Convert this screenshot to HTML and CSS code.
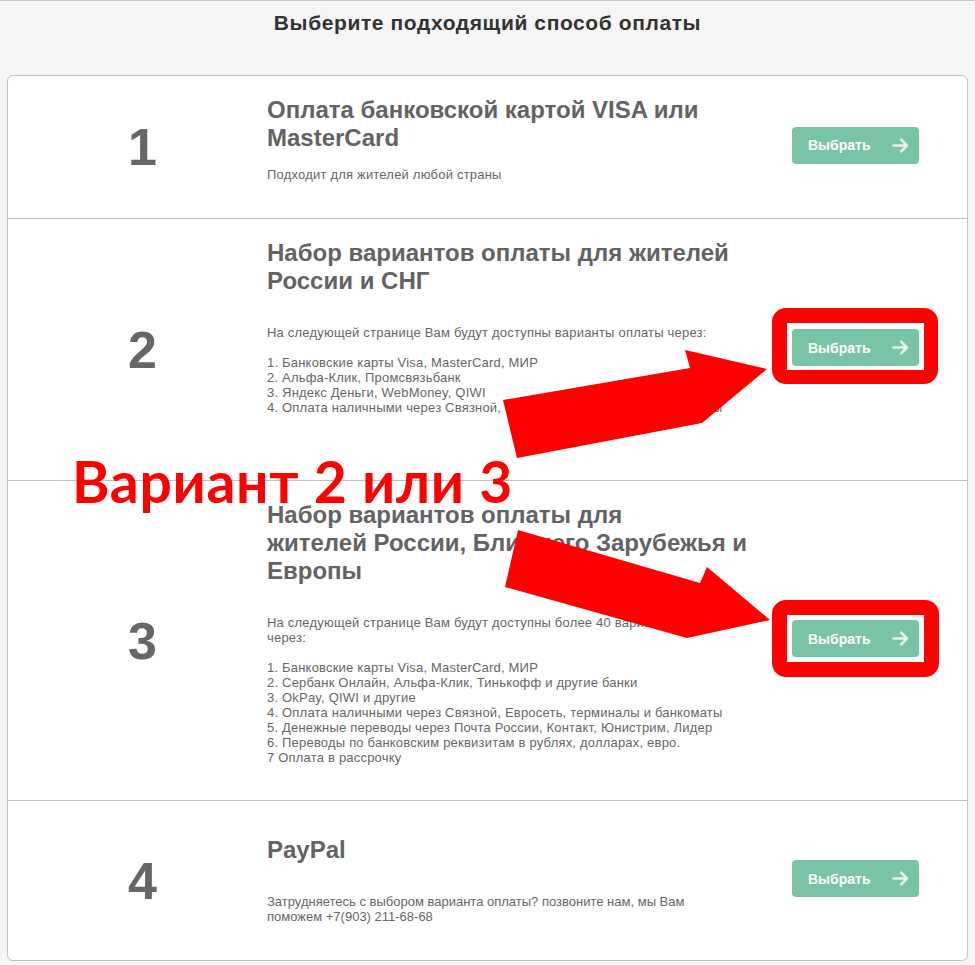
FILE: index.html
```html
<!DOCTYPE html>
<html lang="ru">
<head>
<meta charset="utf-8">
<title>Выберите подходящий способ оплаты</title>
<link rel="stylesheet" href="styles.css">
</head>
<body>
<div class="page">
  <h1 class="title">Выберите подходящий способ оплаты</h1>
  <div class="card">
    <div class="row r1">
      <div class="num">1</div>
      <div class="info">
        <h2>Оплата банковской картой VISA или MasterCard</h2>
        <p>Подходит для жителей любой страны</p>
      </div>
      <div class="act"><a class="btn"><span>Выбрать</span><svg width="17" height="15" viewBox="0 0 17 15"><path d="M1.5 7.5H15M9.2 1.6L15 7.5L9.2 13.4"/></svg></a></div>
    </div>
    <div class="row r2">
      <div class="num">2</div>
      <div class="info">
        <h2>Набор вариантов оплаты для жителей России и СНГ</h2>
        <p>На следующей странице Вам будут доступны варианты оплаты через:<br><br>1. Банковские карты Visa, MasterCard, МИР<br>2. Альфа-Клик, Промсвязьбанк<br>3. Яндекс Деньги, WebMoney, QIWI<br>4. Оплата наличными через Связной, Евросеть, терминалы и банкоматы</p>
      </div>
      <div class="act"><a class="btn"><span>Выбрать</span><svg width="17" height="15" viewBox="0 0 17 15"><path d="M1.5 7.5H15M9.2 1.6L15 7.5L9.2 13.4"/></svg></a></div>
    </div>
    <div class="row r3">
      <div class="num">3</div>
      <div class="info">
        <h2>Набор вариантов оплаты для<br>жителей России, Ближнего Зарубежья и Европы</h2>
        <p>На следующей странице Вам будут доступны более 40 вариантов оплаты через:<br><br>1. Банковские карты Visa, MasterCard, МИР<br>2. Сербанк Онлайн, Альфа-Клик, Тинькофф и другие банки<br>3. OkPay, QIWI и другие<br>4. Оплата наличными через Связной, Евросеть, терминалы и банкоматы<br>5. Денежные переводы через Почта России, Контакт, Юнистрим, Лидер<br>6. Переводы по банковским реквизитам в рублях, долларах, евро.<br>7 Оплата в рассрочку</p>
      </div>
      <div class="act"><a class="btn"><span>Выбрать</span><svg width="17" height="15" viewBox="0 0 17 15"><path d="M1.5 7.5H15M9.2 1.6L15 7.5L9.2 13.4"/></svg></a></div>
    </div>
    <div class="row r4">
      <div class="num">4</div>
      <div class="info">
        <h2>PayPal</h2>
        <p>Затрудняетесь с выбором варианта оплаты? позвоните нам, мы Вам<br>поможем +7(903) 211-68-68</p>
      </div>
      <div class="act"><a class="btn"><span>Выбрать</span><svg width="17" height="15" viewBox="0 0 17 15"><path d="M1.5 7.5H15M9.2 1.6L15 7.5L9.2 13.4"/></svg></a></div>
    </div>
  </div>
</div>
<svg class="marks" width="975" height="965" viewBox="0 0 975 965">
  <path fill-rule="evenodd" d="M786 308H924A14 14 0 0 1 938 322V370A14 14 0 0 1 924 384H786A14 14 0 0 1 772 370V322A14 14 0 0 1 786 308ZM787 323V370H924V323Z"/>
  <path fill-rule="evenodd" d="M786 600H925A14 14 0 0 1 939 614V663A14 14 0 0 1 925 677H786A14 14 0 0 1 772 663V614A14 14 0 0 1 786 600ZM787 615V662H924V615Z"/>
  <polygon points="503,400 690,368 685,350 767,369 702,423 517,458"/>
  <polygon points="518,530 700,583 707,567 770,620 687,638 505,587"/>
</svg>
<div class="note">Вариант 2 или 3</div>
</body>
</html>
```
FILE: styles.css
```css
html, body {
  margin: 0;
  padding: 0;
}
body {
  background: #f5f5f5;
  border-top: 1px solid #c8c8c8;
  font-family: Arial, "Liberation Sans", sans-serif;
  color: #666;
  position: relative;
  min-height: 964px;
}
.page {
  padding-top: 10px;
}
.title {
  margin: 0 0 40px;
  font-size: 21px;
  letter-spacing: 0.6px;
  line-height: 24px;
  font-weight: bold;
  color: #333;
  text-align: center;
}
.card {
  margin: 0 7px;
  background: #fff;
  border: 1px solid #c4c4c4;
  border-radius: 6px;
  overflow: hidden;
}
.row {
  display: grid;
  grid-template-columns: 259px 487px 1fr;
}
.row + .row {
  border-top: 1px solid #c0c0c0;
}
.num {
  align-self: center;
  padding-left: 10px;
  text-align: center;
  font-size: 52px;
  line-height: 1;
  font-weight: bold;
  color: #666;
}
.info h2 {
  margin: 0;
  font-size: 24px;
  line-height: 28px;
  font-weight: bold;
  color: #636363;
}
.info p {
  margin: 30px 0 0;
  font-size: 13px;
  letter-spacing: 0.2px;
  line-height: 15px;
  color: #666;
}
.r1 .info { padding: 20px 0 36px; }
.r1 .info p { margin-top: 15px; }
.r2 .info { padding: 20px 0 65px; }
.r3 .info { padding: 20px 0 35px; }
.r4 .info { padding: 35px 0 36px; }
.r4 .info p { letter-spacing: 0; }
.act {
  align-self: center;
  display: flex;
  justify-content: flex-end;
  padding-right: 48px;
  margin-bottom: 4px;
}
.btn {
  box-sizing: border-box;
  width: 127px;
  height: 37px;
  padding: 0 10px 0 16px;
  display: flex;
  align-items: center;
  justify-content: space-between;
  background: #79c4a5;
  border-radius: 4px;
  color: #fff;
  font-size: 14px;
  font-weight: bold;
  text-decoration: none;
}
.btn svg path {
  fill: none;
  stroke: #e4f3ec;
  stroke-width: 2.6;
  stroke-linecap: round;
  stroke-linejoin: round;
}
.marks {
  position: absolute;
  left: 0;
  top: -1px;
  fill: #ff0000;
  pointer-events: none;
}
.note {
  position: absolute;
  left: 72px;
  top: 452px;
  font-family: Lato, "Open Sans", sans-serif;
  font-weight: bold;
  font-size: 57px;
  letter-spacing: 0.7px;
  line-height: 56px;
  color: #ff0000;
  white-space: nowrap;
}
```
